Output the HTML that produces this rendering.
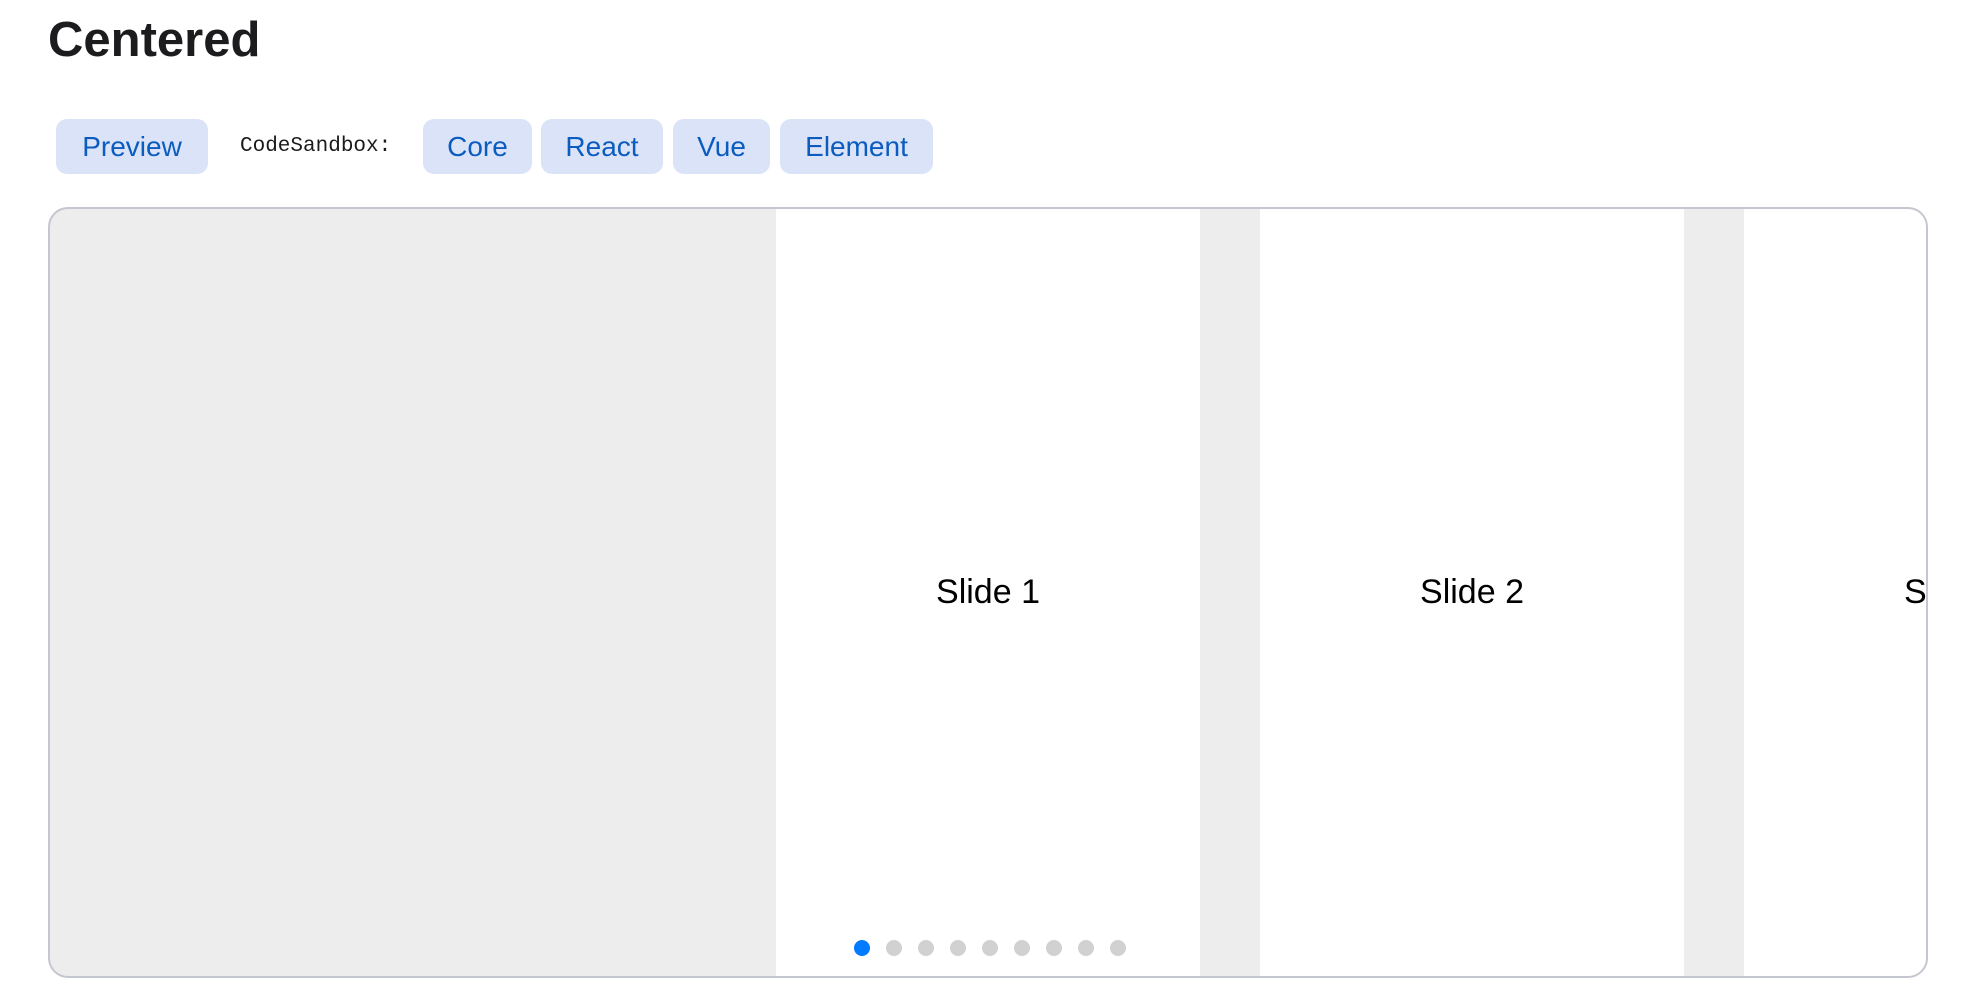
<!DOCTYPE html>
<html><head><meta charset="utf-8"><style>
html,body{margin:0;padding:0;background:#fff;width:1972px;height:992px;overflow:hidden}
body{font-family:"Liberation Sans",Arial,sans-serif;position:relative}
h1{position:absolute;left:48px;top:10px;margin:0;font-size:49px;font-weight:bold;color:#1c1c1e;line-height:60px}
.btn{position:absolute;top:119px;height:55px;background:#dbe3f8;border-radius:11px;color:#0b5cbf;font-size:28px;line-height:55px;text-align:center}
.mono{position:absolute;left:240px;top:119px;line-height:55px;font-family:"Liberation Mono",monospace;font-size:21px;color:#1a1a1a}
.box{position:absolute;left:48px;top:207px;width:1876px;height:767px;border:2px solid #c4c7cf;border-radius:20px;background:#ededed;overflow:hidden}
.slide{position:absolute;top:0;width:424px;height:767px;background:#fff;font-size:34px;color:#000;display:flex;align-items:center;justify-content:center}
.dots{position:absolute;left:804px;top:731px;display:flex;gap:16px}
.dots span{width:16px;height:16px;border-radius:50%;background:#d1d1d1}
.dots span:first-child{background:#007aff}
</style></head><body>
<h1>Centered</h1>
<div class="btn" style="left:56px;width:152px">Preview</div>
<div class="mono">CodeSandbox:</div>
<div class="btn" style="left:423px;width:109px">Core</div>
<div class="btn" style="left:541px;width:122px">React</div>
<div class="btn" style="left:673px;width:97px">Vue</div>
<div class="btn" style="left:780px;width:153px">Element</div>
<div class="box">
<div class="slide" style="left:726px">Slide 1</div>
<div class="slide" style="left:1210px">Slide 2</div>
<div class="slide" style="left:1694px">Slide 3</div>
<div class="dots"><span></span><span></span><span></span><span></span><span></span><span></span><span></span><span></span><span></span></div>
</div>
</body></html>
